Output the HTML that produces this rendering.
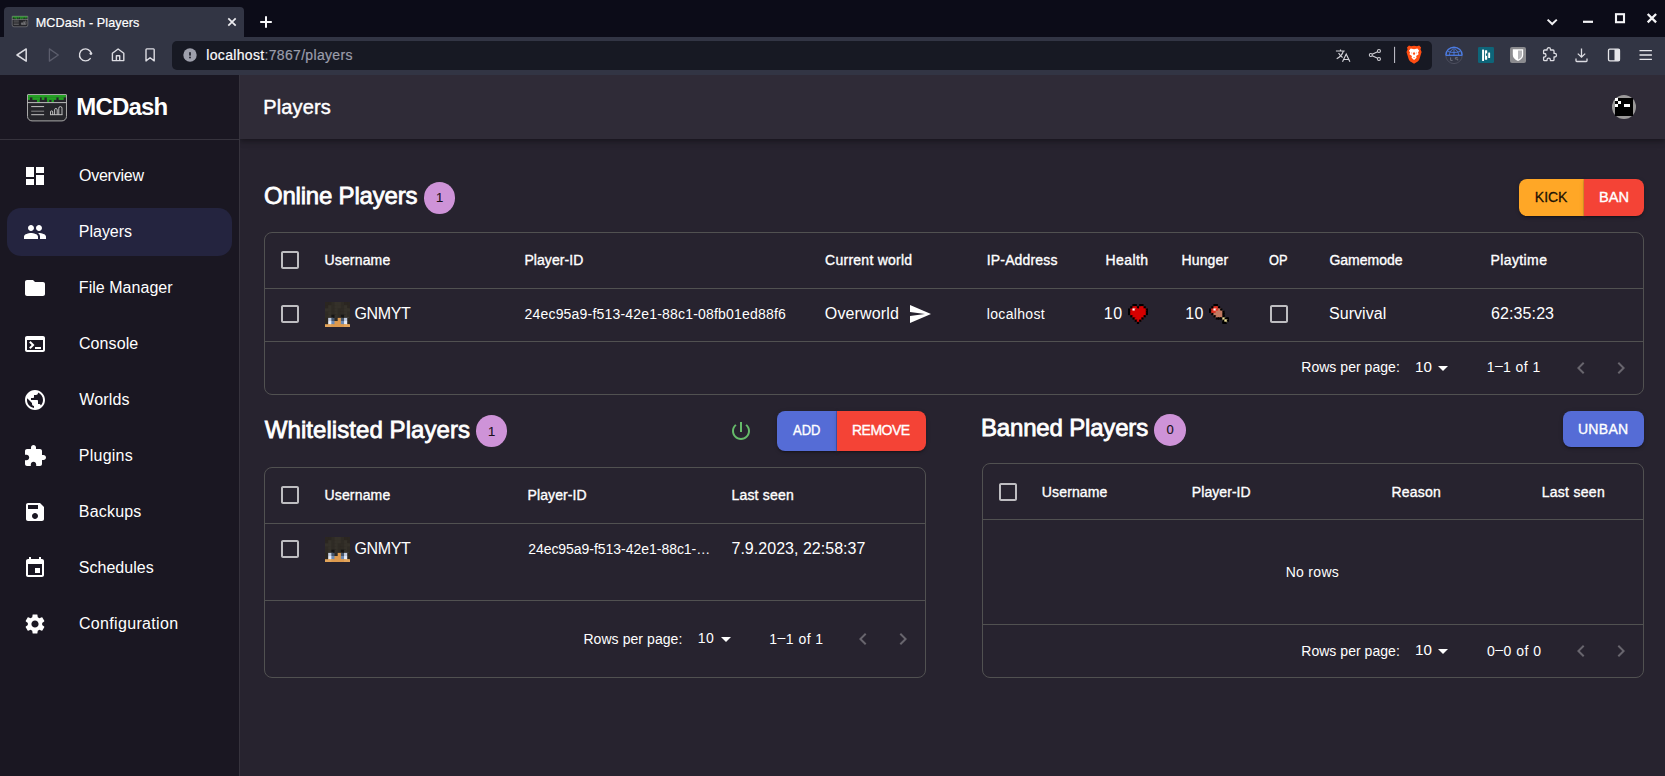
<!DOCTYPE html>
<html lang="en">
<head>
<meta charset="utf-8">
<title>MCDash - Players</title>
<style>
*{box-sizing:border-box;margin:0;padding:0}
html,body{width:1665px;height:776px;overflow:hidden;background:#27232f}
body{position:relative;font-family:"Liberation Sans",Arial,sans-serif;color:#fff;-webkit-font-smoothing:antialiased}
.abs,.t,.ic{position:absolute}
.t{white-space:nowrap;line-height:0;display:block;font-weight:400}
.t.m{-webkit-text-stroke:.35px currentColor}
h5.t.m{-webkit-text-stroke:.8px currentColor}
h6.t.m{-webkit-text-stroke:.45px currentColor}
.t.b{font-weight:700}
.dash{position:relative;top:-1.6px}
.t.s{-webkit-text-stroke:.2px currentColor}
.ic{display:block}
h1,h2,h5,h6{font-weight:400}
/* browser chrome */
.tabstrip{left:0;top:0;width:1665px;height:37px;background:#0c0c18}
.tab{left:4px;top:7px;width:240px;height:30px;background:#323544;border-radius:4px 4px 0 0}
.toolbar{left:0;top:37px;width:1665px;height:38px;background:#323544}
.urlbar{left:172px;top:41px;width:1260px;height:28.5px;background:#171923;border-radius:5px}
/* app */
.sidebar{left:0;top:75px;width:240px;height:701px;background:#1a1722;border-right:1px solid #36333d}
.sidehead{left:0;top:75px;width:239px;height:65px;border-bottom:1px solid #36333d}
.sel{left:7.3px;top:208px;width:224.6px;height:48px;border-radius:14px;background:#24243f}
.appbar{left:240px;top:75px;width:1425px;height:64px;background:#2f2b37;box-shadow:0 2px 4px -1px rgba(0,0,0,.2),0 4px 5px 0 rgba(0,0,0,.14),0 1px 10px 0 rgba(0,0,0,.12);clip-path:inset(0 0 -20px 0)}
.grid{border:1px solid #515151;border-radius:8px}
.hl{height:1px;background:#515151}
.badge{width:31.5px;height:32px;border-radius:50%;background:#ce93d8}
.btn{height:36.5px;box-shadow:0 3px 1px -2px rgba(0,0,0,.2),0 2px 2px 0 rgba(0,0,0,.14),0 1px 5px 0 rgba(0,0,0,.12)}
</style>
</head>
<body>

<div class="abs tabstrip"></div>
<div class="abs tab"></div>
<svg class="ic" style="left:12px;top:16.2px;width:16px;height:11px;overflow:visible" viewBox="0 0 40 27.4"><path d="M1 .5H39a.5 .5 0 0 1 .5 .5V22.400a4.500 4.500 0 0 1-4.500 4.500H5A4.500 4.500 0 0 1 .5 22.400V1A.5 .5 0 0 1 1 .5z" fill="#25252a"/><rect x="0.6" y="0.6" width="38.8" height="2.8" fill="#24a024"/><rect x="0.6" y="3.2" width="2.3" height="2.700" fill="#24a024"/><rect x="5.4" y="3.2" width="7.6" height="2.700" fill="#24a024"/><rect x="14.7" y="3.2" width="2.7" height="2.700" fill="#24a024"/><rect x="19.8" y="3.2" width="9.6" height="2.700" fill="#24a024"/><rect x="31.6" y="3.2" width="5.1" height="2.700" fill="#24a024"/><rect x="10.0" y="5.8" width="2.7" height="2.300" fill="#24a024"/><rect x="20.1" y="5.8" width="2.2" height="2.300" fill="#24a024"/><rect x="24.5" y="5.8" width="2.4" height="2.300" fill="#24a024"/><path d="M1 .5H39a.5 .5 0 0 1 .5 .5V22.400a4.500 4.500 0 0 1-4.500 4.500H5A4.500 4.500 0 0 1 .5 22.400V1A.5 .5 0 0 1 1 .5z" fill="none" stroke="#aaaaaa" stroke-width="1.1"/><path d="M.5 8.600H39.500" stroke="#bdbdbd" stroke-width="1.1" fill="none"/><path d="M4.200 12.600H17.100M4.200 20.700H17.100" stroke="#c4c4c4" stroke-width="1" fill="none"/><path d="M4.200 17.200H17.100" stroke="#8a8a8a" stroke-width="1" fill="none"/><path d="M23 20.700H35.500M23.500 20.700V18a1.100 1.100 0 0 1 2.200 0V20.700M27.600 20.700V15.800a1.300 1.300 0 0 1 2.600 0V20.700M31.800 20.700V14.200a1.600 1.600 0 0 1 3.200 0V20.700" stroke="#cfcfcf" stroke-width=".9" fill="none"/></svg>
<span class="t s" style="left:35.68px;top:23.00px;font-size:12.6px;letter-spacing:0.105px;color:#fff;">MCDash - Players</span>
<svg class="ic" style="left:226px;top:16px;width:12px;height:12px" viewBox="0 0 12 12"><path d="M2.300 2.300l7.400 7.400M9.700 2.300l-7.400 7.400" stroke="#ececf0" stroke-width="1.700" fill="none"/></svg>
<svg class="ic" style="left:259px;top:15px;width:14px;height:14px" viewBox="0 0 14 14"><path d="M7 1.200v11.600M1.200 7h11.600" stroke="#f8f8fa" stroke-width="2" fill="none"/></svg>
<svg class="ic" style="left:1540px;top:8px;width:125px;height:24px" viewBox="0 0 125 24"><path d="M7.600 11.600l4.600 4.400 4.600-4.400" stroke="#f0f0f2" stroke-width="2" fill="none"/><path d="M43 13.800h10" stroke="#f4f4f6" stroke-width="2.200" fill="none"/><rect x="76" y="6.200" width="8" height="8" stroke="#f4f4f6" stroke-width="2.100" fill="none"/><path d="M107.700 6l8.400 8.400M116.100 6l-8.400 8.400" stroke="#f4f4f6" stroke-width="2.300" fill="none"/></svg>
<div class="abs toolbar"></div>
<div class="abs urlbar"></div>
<svg class="ic" style="left:8px;top:43px;width:160px;height:24px" viewBox="0 0 160 24" fill="none" stroke-linejoin="round" stroke-linecap="round"><path d="M18.200 5.900L9 12l9.200 6.100z" stroke="#dcdce2" stroke-width="1.500"/><path d="M41.400 5.900L50.300 12l-8.900 6.100z" stroke="#5b5d6c" stroke-width="1.300"/><path d="M83.370 10.650A6 6 0 1 0 82.230 15.600" stroke="#dcdce2" stroke-width="1.400"/><circle cx="82.900" cy="10.600" r="1.400" fill="#dcdce2"/><path d="M104.400 17.600V10.300l5.700-4.300 5.700 4.300v7.300zM108.400 17.600v-4.800h3.300v4.800" stroke="#dcdce2" stroke-width="1.400"/><path d="M138 6.700a.8.800 0 0 1 .8-.8h6.600a.8.800 0 0 1 .8.800v11.200l-4.100-3.100-4.100 3.100z" stroke="#dcdce2" stroke-width="1.400"/></svg>
<svg class="ic" style="left:183px;top:47.600px;width:14px;height:14px" viewBox="0 0 14 14"><circle cx="7" cy="7" r="6.700" fill="#9ea0ac"/><rect x="6.200" y="4.200" width="1.600" height="3.400" fill="#171923"/><rect x="6.200" y="8.700" width="1.600" height="1.600" fill="#171923"/></svg>
<div class="t s" style="left:206.29px;top:55.00px;font-size:14px;letter-spacing:0.326px"><span style="color:#fbfbfd">localhost</span><span style="color:#9b9dab">:7867/players</span></div>
<svg class="ic" style="left:1330px;top:43px;width:335px;height:24px" viewBox="0 0 335 24"><g stroke="#d2d2d8" stroke-width="1.150" fill="none"><path d="M5.900 8h8.800M10.500 6.500V8M13.400 8c-1 3.400-3.400 6-6.700 7.800M8.600 10.100c.9 1.800 2.300 3.300 4 4.400"/><path d="M12.500 18.800l3.700-7.800 3.700 7.800M13.900 16.500h4.600"/></g><g stroke="#d2d2d8" stroke-width="1.050" fill="none"><circle cx="48.950" cy="8.050" r="1.500"/><circle cx="48.950" cy="16" r="1.500"/><circle cx="40.800" cy="12" r="1.500"/><path d="M42.200 11.300l5.400-2.600M42.200 12.700l5.400 2.600"/></g><path d="M64.600 3.800v16.200" stroke="#c9c9d2" stroke-width="1"/><g transform="translate(84.050 11.650) scale(1.240 1.150) translate(-84 -12.350)"><path d="M84 4.600l2.400.4 1.700-.6 1.600 1.800-.5 1.500.9 2.400-1.800 6.300c-.300 1-1 1.800-2 2.400L84 20.300l-2.300-1.500c-1-.600-1.700-1.400-2-2.400l-1.800-6.300.9-2.400-.500-1.500 1.600-1.800 1.700.6z" fill="#ff4d12"/><path d="M84 7.600l2.700-.5 1.400 1.900-.9 1.500.5 1.400-2 1.700.3 1.400L84 16.900l-2-1.900.3-1.400-2-1.700.5-1.400-.9-1.500 1.400-1.900z" fill="#fff"/><path d="M84 9.800l1 1.700-1 1.400-1-1.400zM81.600 10.400l1.100.5-.7.500zM86.400 10.400l-1.100.5.700.5zM83.300 14.400h1.400l-.7.900z" fill="#ff4d12"/></g><g fill="none"><path d="M115.800 12.400a8.200 8.200 0 0 0 16.400 0" stroke="#4b4d5d" stroke-width="1"/><path d="M115.800 12.400a8.200 8.200 0 0 1 16.400 0" stroke="#4c7ce2" stroke-width="1.400"/><path d="M116 12.300h16" stroke="#4c7ce2" stroke-width="1.300"/><path d="M124 4.300v8M119.300 12.300c.2-2.700 1.500-4.900 3.600-6.400M128.700 12.300c-.2-2.700-1.500-4.900-3.600-6.400M118 8.500c3.900 1.300 8.100 1.300 12 0" stroke="#4c7ce2" stroke-width=".9"/><path d="M120.600 14.400v3h2M127.700 14.600h-2.300v1.500h2.300v1.400" stroke="#6d6f7d" stroke-width="1"/></g><rect x="148" y="4" width="16" height="16" rx="1.200" fill="#0e6579"/><rect x="152.100" y="6.400" width="1.900" height="11.600" rx=".5" fill="#fff"/><rect x="154.900" y="7.200" width="2.300" height="9.600" rx=".5" fill="#fff"/><rect x="155.900" y="10.400" width="1.300" height="2.400" fill="#0e6579"/><rect x="158.200" y="9.600" width="1.900" height="5.300" rx=".5" fill="#fff"/><rect x="180" y="4" width="16" height="16" rx="2" fill="#8b8b8f"/><path d="M182.800 6.300h10.400v5.600c0 2.800-2.300 4.700-5.200 6.100-2.900-1.400-5.200-3.300-5.200-6.100z" fill="#fff"/><path d="M188 7.400h4v4.500c0 2.100-1.700 3.500-4 4.700z" fill="#8b8b8f" opacity=".62"/><g transform="translate(-1.700 0)"><path d="M216.200 7h2.600v-.6a1.700 1.700 0 0 1 3.400 0V7h2.600c.500 0 .900.400.900.900v2.500h.7a1.800 1.800 0 0 1 0 3.600h-.7v2.700c0 .500-.400.900-.900.900h-2.700v-.7a1.700 1.700 0 0 0-3.400 0v.7h-2.500a.9.900 0 0 1-.9-.9v-2.600h.6a1.800 1.800 0 0 0 0-3.600h-.6V7.900c0-.500.400-.900.900-.900z" stroke="#dcdce2" stroke-width="1.300" fill="none" stroke-linejoin="round"/></g><path d="M251.500 5.500v8.500M247.800 10.600l3.700 3.600 3.700-3.600M246 15.500v2.200c0 .5.400.8.800.8h9.400c.4 0 .800-.3.800-.8v-2.200" stroke="#dcdce2" stroke-width="1.300" fill="none"/><rect x="278.500" y="6.200" width="11" height="11.600" rx="1.300" stroke="#e6e6ea" stroke-width="1.300" fill="none"/><rect x="284.500" y="6.200" width="5.200" height="11.600" fill="#e6e6ea"/><path d="M309.500 7.600h12.400M309.500 12h12.400M309.500 16.400h12.400" stroke="#e6e6ea" stroke-width="1.400"/></svg>
<nav>
<div class="abs sidebar"></div><div class="abs sidehead"></div>
<svg class="ic" style="left:26.9px;top:93.9px;width:40px;height:27.4px;overflow:visible" viewBox="0 0 40 27.4"><path d="M1 .5H39a.5 .5 0 0 1 .5 .5V22.400a4.500 4.500 0 0 1-4.500 4.500H5A4.500 4.500 0 0 1 .5 22.400V1A.5 .5 0 0 1 1 .5z" fill="#25252a"/><rect x="0.6" y="0.6" width="38.8" height="2.8" fill="#24a024"/><rect x="0.6" y="3.2" width="2.3" height="2.700" fill="#24a024"/><rect x="5.4" y="3.2" width="7.6" height="2.700" fill="#24a024"/><rect x="14.7" y="3.2" width="2.7" height="2.700" fill="#24a024"/><rect x="19.8" y="3.2" width="9.6" height="2.700" fill="#24a024"/><rect x="31.6" y="3.2" width="5.1" height="2.700" fill="#24a024"/><rect x="10.0" y="5.8" width="2.7" height="2.300" fill="#24a024"/><rect x="20.1" y="5.8" width="2.2" height="2.300" fill="#24a024"/><rect x="24.5" y="5.8" width="2.4" height="2.300" fill="#24a024"/><path d="M1 .5H39a.5 .5 0 0 1 .5 .5V22.400a4.500 4.500 0 0 1-4.500 4.500H5A4.500 4.500 0 0 1 .5 22.400V1A.5 .5 0 0 1 1 .5z" fill="none" stroke="#aaaaaa" stroke-width="1.0"/><path d="M.5 8.600H39.500" stroke="#bdbdbd" stroke-width="1.0" fill="none"/><path d="M4.200 12.600H17.100M4.200 20.700H17.100" stroke="#c4c4c4" stroke-width="1" fill="none"/><path d="M4.200 17.200H17.100" stroke="#8a8a8a" stroke-width="1" fill="none"/><path d="M23 20.700H35.500M23.500 20.700V18a1.100 1.100 0 0 1 2.200 0V20.700M27.600 20.700V15.800a1.300 1.300 0 0 1 2.600 0V20.700M31.800 20.700V14.200a1.600 1.600 0 0 1 3.200 0V20.700" stroke="#cfcfcf" stroke-width=".9" fill="none"/></svg>
<h1 class="t b" style="left:76.23px;top:106.50px;font-size:24px;letter-spacing:-0.814px;">MCDash</h1>
<div class="abs sel"></div>
<svg class="ic" style="left:23px;top:164px;width:24px;height:24px;fill:#fff;" viewBox="0 0 24 24"><path d="M3 13h8V3H3v10zm0 8h8v-6H3v6zm10 0h8V11h-8v10zm0-18v6h8V3h-8z"/></svg>
<span class="t" style="left:78.91px;top:175.50px;font-size:16px;letter-spacing:-0.225px;">Overview</span>
<svg class="ic" style="left:23px;top:220px;width:24px;height:24px;fill:#fff;" viewBox="0 0 24 24"><path d="M16 11c1.660 0 2.990-1.340 2.990-3S17.660 5 16 5c-1.660 0-3 1.340-3 3s1.340 3 3 3zm-8 0c1.660 0 2.990-1.340 2.990-3S9.660 5 8 5C6.340 5 5 6.340 5 8s1.340 3 3 3zm0 2c-2.330 0-7 1.170-7 3.500V19h14v-2.500c0-2.330-4.670-3.500-7-3.500zm8 0c-.290 0-.620.020-.970.050 1.160.840 1.970 1.970 1.970 3.450V19h6v-2.500c0-2.330-4.670-3.500-7-3.500z"/></svg>
<span class="t" style="left:78.85px;top:231.50px;font-size:16px;letter-spacing:-0.029px;">Players</span>
<svg class="ic" style="left:23px;top:276px;width:24px;height:24px;fill:#fff;" viewBox="0 0 24 24"><path d="M10 4H4c-1.100 0-1.990.900-1.990 2L2 18c0 1.100.900 2 2 2h16c1.100 0 2-.900 2-2V8c0-1.100-.900-2-2-2h-8l-2-2z"/></svg>
<span class="t" style="left:78.86px;top:287.50px;font-size:16px;letter-spacing:0.030px;">File Manager</span>
<svg class="ic" style="left:23px;top:332px;width:24px;height:24px;fill:#fff;" viewBox="0 0 24 24"><path d="M20 4H4c-1.110 0-2 .900-2 2v12c0 1.100.890 2 2 2h16c1.100 0 2-.900 2-2V6c0-1.100-.890-2-2-2zm0 14H4V8h16v10zm-2-1h-6v-2h6v2zM7.500 17l-1.410-1.410L8.670 13l-2.590-2.590L7.500 9l4 4-4 4z"/></svg>
<span class="t" style="left:78.88px;top:343.50px;font-size:16px;letter-spacing:0.106px;">Console</span>
<svg class="ic" style="left:23px;top:388px;width:24px;height:24px;fill:#fff;" viewBox="0 0 24 24"><path d="M12 2C6.480 2 2 6.480 2 12s4.480 10 10 10 10-4.480 10-10S17.520 2 12 2zm-1 17.930c-3.950-.490-7-3.850-7-7.930 0-.620.080-1.210.210-1.790L9 15v1c0 1.100.900 2 2 2v1.930zm6.900-2.540c-.260-.810-1-1.390-1.900-1.390h-1v-3c0-.550-.450-1-1-1H8v-2h2c.550 0 1-.450 1-1V7h2c1.100 0 2-.900 2-2v-.410c2.930 1.190 5 4.060 5 7.410 0 2.080-.800 3.970-2.100 5.390z"/></svg>
<span class="t" style="left:79.32px;top:399.50px;font-size:16px;letter-spacing:0.134px;">Worlds</span>
<svg class="ic" style="left:23px;top:444px;width:24px;height:24px;fill:#fff;" viewBox="0 0 24 24"><path d="M20.500 11H19V7c0-1.100-.900-2-2-2h-4V3.500C13 2.120 11.880 1 10.500 1S8 2.120 8 3.500V5H4c-1.100 0-1.990.900-1.990 2v3.800H3.500c1.490 0 2.700 1.210 2.700 2.700s-1.210 2.700-2.700 2.700H2V20c0 1.100.900 2 2 2h3.800v-1.500c0-1.490 1.210-2.700 2.700-2.700 1.490 0 2.700 1.210 2.700 2.700V22H17c1.100 0 2-.900 2-2v-4h1.500c1.380 0 2.500-1.120 2.500-2.500S21.880 11 20.500 11z"/></svg>
<span class="t" style="left:78.86px;top:455.50px;font-size:16px;letter-spacing:0.234px;">Plugins</span>
<svg class="ic" style="left:23px;top:500px;width:24px;height:24px;fill:#fff;" viewBox="0 0 24 24"><path d="M17 3H5c-1.110 0-2 .900-2 2v14c0 1.100.890 2 2 2h14c1.100 0 2-.900 2-2V7l-4-4zm-5 16c-1.660 0-3-1.340-3-3s1.340-3 3-3 3 1.340 3 3-1.340 3-3 3zm3-10H5V5h10v4z"/></svg>
<span class="t" style="left:78.86px;top:511.50px;font-size:16px;letter-spacing:0.179px;">Backups</span>
<svg class="ic" style="left:23px;top:556px;width:24px;height:24px;fill:#fff;" viewBox="0 0 24 24"><path d="M17 12h-5v5h5v-5zM16 1v2H8V1H6v2H5c-1.110 0-1.990.900-1.990 2L3 19c0 1.100.890 2 2 2h14c1.100 0 2-.900 2-2V5c0-1.100-.900-2-2-2h-1V1h-2zm3 18H5V8h14v11z"/></svg>
<span class="t" style="left:78.79px;top:567.50px;font-size:16px;letter-spacing:0.029px;">Schedules</span>
<svg class="ic" style="left:23px;top:612px;width:24px;height:24px;fill:#fff;" viewBox="0 0 24 24"><path d="M19.140 12.940c.040-.300.060-.610.060-.940 0-.320-.020-.640-.070-.940l2.030-1.580c.180-.140.230-.410.120-.610l-1.920-3.320c-.120-.220-.370-.290-.590-.220l-2.390.960c-.500-.380-1.030-.700-1.620-.940l-.360-2.540c-.040-.240-.240-.410-.480-.410h-3.840c-.240 0-.430.170-.470.410l-.360 2.540c-.590.240-1.130.570-1.620.940l-2.390-.960c-.220-.080-.470 0-.590.220L2.740 8.870c-.120.210-.080.470.120.610l2.030 1.580c-.050.300-.090.630-.090.940s.020.640.070.940l-2.030 1.580c-.180.140-.230.410-.120.610l1.920 3.320c.120.220.370.290.590.220l2.390-.960c.500.380 1.030.700 1.620.940l.360 2.540c.050.240.240.410.480.410h3.840c.240 0 .440-.170.470-.410l.360-2.540c.590-.240 1.130-.560 1.620-.940l2.390.960c.220.080.470 0 .590-.220l1.920-3.320c.120-.220.070-.470-.120-.610l-2.010-1.580zM12 15.600c-1.980 0-3.600-1.620-3.600-3.600s1.620-3.600 3.600-3.600 3.600 1.620 3.600 3.600-1.620 3.600-3.600 3.600z"/></svg>
<span class="t" style="left:78.88px;top:623.50px;font-size:16px;letter-spacing:0.337px;">Configuration</span>
</nav>
<header>
<div class="abs appbar"></div>
<h6 class="t m" style="left:263.18px;top:107.00px;font-size:20px;letter-spacing:0.166px;">Players</h6>
<div class="abs" style="left:1612px;top:95px;width:24px;height:24px;border-radius:50%;background:#9b9999"></div>
<svg class="ic" style="left:1615px;top:98px;width:18px;height:18px" viewBox="0 0 6 6"><rect width="6" height="6" fill="#000"/><rect x="0" y="0" width="1" height="1" fill="#fff"/><rect x="1" y="1" width="1" height="1" fill="#fff"/><rect x="0" y="2" width="1" height="1" fill="#fff"/><rect x="3" y="2" width="2" height="1" fill="#fff"/></svg>
</header>
<main>
<section>
<h5 class="t m" style="left:263.92px;top:195.50px;font-size:24px;letter-spacing:-0.193px;">Online Players</h5>
<div class="abs badge" style="left:423.800px;top:181.800px"></div>
<span class="t s" style="left:436.08px;top:197.50px;font-size:13px;color:rgba(0,0,0,.87);">1</span>
<div class="abs btn" style="left:1519px;top:179px;width:64.500px;background:#ffa726;border-radius:8px 0 0 8px;border-right:1px solid #e39a2b"></div>
<div class="abs btn" style="left:1583.500px;top:179px;width:60.500px;background:#f44336;border-radius:0 8px 8px 0"></div>
<span class="t m" style="left:1534.87px;top:197.00px;font-size:14px;letter-spacing:-0.027px;color:rgba(0,0,0,.87);">KICK</span>
<span class="t m" style="left:1598.78px;top:197.00px;font-size:14px;transform:scaleX(1.0431);transform-origin:0 0;">BAN</span>
<div class="abs grid" style="left:264px;top:232px;width:1380px;height:163px"></div>
<div class="abs hl" style="left:265px;top:288px;width:1378px"></div>
<div class="abs hl" style="left:265px;top:341px;width:1378px"></div>
<svg class="ic" style="left:278px;top:248px;width:24px;height:24px;fill:rgba(255,255,255,0.7);" viewBox="0 0 24 24"><path d="M19 5v14H5V5h14m0-2H5c-1.100 0-2 .900-2 2v14c0 1.100.900 2 2 2h14c1.100 0 2-.900 2-2V5c0-1.100-.900-2-2-2z"/></svg>
<span class="t m" style="left:324.50px;top:260.00px;font-size:14px;letter-spacing:0.157px;">Username</span>
<span class="t m" style="left:524.42px;top:260.00px;font-size:14px;letter-spacing:0.070px;">Player-ID</span>
<span class="t m" style="left:825.12px;top:260.00px;font-size:14px;letter-spacing:0.250px;">Current world</span>
<span class="t m" style="left:986.80px;top:260.00px;font-size:14px;letter-spacing:0.149px;">IP-Address</span>
<span class="t m" style="left:1105.42px;top:260.00px;font-size:14px;letter-spacing:0.442px;">Health</span>
<span class="t m" style="left:1181.42px;top:260.00px;font-size:14px;letter-spacing:0.164px;">Hunger</span>
<span class="t m" style="left:1269.33px;top:260.00px;font-size:14px;transform:scaleX(0.9178);transform-origin:0 0;">OP</span>
<span class="t m" style="left:1329.41px;top:260.00px;font-size:14px;letter-spacing:0.010px;">Gamemode</span>
<span class="t m" style="left:1490.54px;top:260.00px;font-size:14px;letter-spacing:0.392px;">Playtime</span>
<svg class="ic" style="left:278px;top:302px;width:24px;height:24px;fill:rgba(255,255,255,0.7);" viewBox="0 0 24 24"><path d="M19 5v14H5V5h14m0-2H5c-1.100 0-2 .900-2 2v14c0 1.100.900 2 2 2h14c1.100 0 2-.900 2-2V5c0-1.100-.900-2-2-2z"/></svg>
<svg class="ic" style="left:324.9px;top:302px;width:25.4px;height:25.4px" viewBox="0 0 8 8"><rect x="0" y="0" width="1.5" height="1.5" fill="#2b2621"/><rect x="1" y="0" width="1.5" height="1.5" fill="#2b2621"/><rect x="2" y="0" width="1.5" height="1.5" fill="#2f2b25"/><rect x="3" y="0" width="1.5" height="1.5" fill="#35312a"/><rect x="4" y="0" width="1.5" height="1.5" fill="#35312a"/><rect x="5" y="0" width="1.5" height="1.5" fill="#2f2b25"/><rect x="6" y="0" width="1.5" height="1.5" fill="#2b2621"/><rect x="7" y="0" width="1" height="1.5" fill="#2b2621"/><rect x="0" y="1" width="1.5" height="1.5" fill="#2b2621"/><rect x="1" y="1" width="1.5" height="1.5" fill="#35312a"/><rect x="2" y="1" width="1.5" height="1.5" fill="#2f2b25"/><rect x="3" y="1" width="1.5" height="1.5" fill="#35312a"/><rect x="4" y="1" width="1.5" height="1.5" fill="#35312a"/><rect x="5" y="1" width="1.5" height="1.5" fill="#2f2b25"/><rect x="6" y="1" width="1.5" height="1.5" fill="#35312a"/><rect x="7" y="1" width="1" height="1.5" fill="#2b2621"/><rect x="0" y="2" width="1.5" height="1.5" fill="#35312a"/><rect x="1" y="2" width="1.5" height="1.5" fill="#35312a"/><rect x="2" y="2" width="1.5" height="1.5" fill="#2f2b25"/><rect x="3" y="2" width="1.5" height="1.5" fill="#35312a"/><rect x="4" y="2" width="1.5" height="1.5" fill="#2f2b25"/><rect x="5" y="2" width="1.5" height="1.5" fill="#2f2b25"/><rect x="6" y="2" width="1.5" height="1.5" fill="#35312a"/><rect x="7" y="2" width="1" height="1.5" fill="#35312a"/><rect x="0" y="3" width="1.5" height="1.5" fill="#2f2b25"/><rect x="1" y="3" width="1.5" height="1.5" fill="#35312a"/><rect x="2" y="3" width="1.5" height="1.5" fill="#2f2b25"/><rect x="3" y="3" width="1.5" height="1.5" fill="#35312a"/><rect x="4" y="3" width="1.5" height="1.5" fill="#2f2b25"/><rect x="5" y="3" width="1.5" height="1.5" fill="#2f2b25"/><rect x="6" y="3" width="1.5" height="1.5" fill="#35312a"/><rect x="7" y="3" width="1" height="1.5" fill="#2f2b25"/><rect x="0" y="4" width="1.5" height="1.5" fill="#2f2b25"/><rect x="1" y="4" width="1.5" height="1.5" fill="#35312a"/><rect x="2" y="4" width="1.5" height="1.5" fill="#161514"/><rect x="3" y="4" width="1.5" height="1.5" fill="#35312a"/><rect x="4" y="4" width="1.5" height="1.5" fill="#2f2b25"/><rect x="5" y="4" width="1.5" height="1.5" fill="#161514"/><rect x="6" y="4" width="1.5" height="1.5" fill="#35312a"/><rect x="7" y="4" width="1" height="1.5" fill="#2f2b25"/><rect x="0" y="5" width="1.5" height="1.5" fill="#2b2621"/><rect x="1" y="5" width="1.5" height="1.5" fill="#c3cde0"/><rect x="2" y="5" width="1.5" height="1.5" fill="#45556b"/><rect x="3" y="5" width="1.5" height="1.5" fill="#2f2b25"/><rect x="4" y="5" width="1.5" height="1.5" fill="#dd9a4e"/><rect x="5" y="5" width="1.5" height="1.5" fill="#45556b"/><rect x="6" y="5" width="1.5" height="1.5" fill="#c3cde0"/><rect x="7" y="5" width="1" height="1.5" fill="#2b2621"/><rect x="0" y="6" width="1.5" height="1.5" fill="#2b2621"/><rect x="1" y="6" width="1.5" height="1.5" fill="#e6ecf7"/><rect x="2" y="6" width="1.5" height="1.5" fill="#6d8ab3"/><rect x="3" y="6" width="1.5" height="1.5" fill="#dd9a4e"/><rect x="4" y="6" width="1.5" height="1.5" fill="#dd9a4e"/><rect x="5" y="6" width="1.5" height="1.5" fill="#6d8ab3"/><rect x="6" y="6" width="1.5" height="1.5" fill="#e6ecf7"/><rect x="7" y="6" width="1" height="1.5" fill="#2b2621"/><rect x="0" y="7" width="1.5" height="1" fill="#e2a45a"/><rect x="1" y="7" width="1.5" height="1" fill="#e2a45a"/><rect x="2" y="7" width="1.5" height="1" fill="#dd9a4e"/><rect x="3" y="7" width="1.5" height="1" fill="#dd9a4e"/><rect x="4" y="7" width="1.5" height="1" fill="#dd9a4e"/><rect x="5" y="7" width="1.5" height="1" fill="#dd9a4e"/><rect x="6" y="7" width="1.5" height="1" fill="#e2a45a"/><rect x="7" y="7" width="1" height="1" fill="#e2a45a"/></svg>
<span class="t" style="left:354.48px;top:313.50px;font-size:16px;letter-spacing:-0.375px;">GNMYT</span>
<span class="t" style="left:524.51px;top:314.00px;font-size:14px;letter-spacing:0.193px;">24ec95a9-f513-42e1-88c1-08fb01ed88f6</span>
<span class="t" style="left:824.84px;top:313.50px;font-size:16px;letter-spacing:0.130px;">Overworld</span>
<svg class="ic" style="left:907.7px;top:302px;width:24px;height:24px;fill:#fff;" viewBox="0 0 24 24"><path d="M2.010 21L23 12 2.010 3 2 10l15 2-15 2z"/></svg>
<span class="t" style="left:986.73px;top:314.00px;font-size:14px;letter-spacing:0.342px;">localhost</span>
<span class="t" style="left:1103.70px;top:313.50px;font-size:16px;letter-spacing:0.717px;">10</span>
<svg class="ic" style="left:1128px;top:304px;width:20px;height:20px" viewBox="0 0 9 9"><rect x="2" y="0" width="1.5" height="1.5" fill="#000"/><rect x="3" y="0" width="1" height="1.5" fill="#000"/><rect x="5" y="0" width="1.5" height="1.5" fill="#000"/><rect x="6" y="0" width="1" height="1.5" fill="#000"/><rect x="1" y="1" width="1.5" height="1.5" fill="#000"/><rect x="2" y="1" width="1.5" height="1.5" fill="#d60000"/><rect x="3" y="1" width="1.5" height="1.5" fill="#d60000"/><rect x="4" y="1" width="1.5" height="1.5" fill="#000"/><rect x="5" y="1" width="1.5" height="1.5" fill="#d60000"/><rect x="6" y="1" width="1.5" height="1.5" fill="#d60000"/><rect x="7" y="1" width="1" height="1.5" fill="#000"/><rect x="0" y="2" width="1.5" height="1.5" fill="#000"/><rect x="1" y="2" width="1.5" height="1.5" fill="#d60000"/><rect x="2" y="2" width="1.5" height="1.5" fill="#fff"/><rect x="3" y="2" width="1.5" height="1.5" fill="#d60000"/><rect x="4" y="2" width="1.5" height="1.5" fill="#d60000"/><rect x="5" y="2" width="1.5" height="1.5" fill="#d60000"/><rect x="6" y="2" width="1.5" height="1.5" fill="#d60000"/><rect x="7" y="2" width="1.5" height="1.5" fill="#d60000"/><rect x="8" y="2" width="1" height="1.5" fill="#000"/><rect x="0" y="3" width="1.5" height="1.5" fill="#000"/><rect x="1" y="3" width="1.5" height="1.5" fill="#d60000"/><rect x="2" y="3" width="1.5" height="1.5" fill="#d60000"/><rect x="3" y="3" width="1.5" height="1.5" fill="#d60000"/><rect x="4" y="3" width="1.5" height="1.5" fill="#d60000"/><rect x="5" y="3" width="1.5" height="1.5" fill="#d60000"/><rect x="6" y="3" width="1.5" height="1.5" fill="#d60000"/><rect x="7" y="3" width="1.5" height="1.5" fill="#d60000"/><rect x="8" y="3" width="1" height="1.5" fill="#000"/><rect x="0" y="4" width="1.5" height="1" fill="#000"/><rect x="1" y="4" width="1.5" height="1.5" fill="#d60000"/><rect x="2" y="4" width="1.5" height="1.5" fill="#d60000"/><rect x="3" y="4" width="1.5" height="1.5" fill="#d60000"/><rect x="4" y="4" width="1.5" height="1.5" fill="#d60000"/><rect x="5" y="4" width="1.5" height="1.5" fill="#d60000"/><rect x="6" y="4" width="1.5" height="1.5" fill="#d60000"/><rect x="7" y="4" width="1.500" height="1" fill="#d60000"/><rect x="7" y="4" width="1" height="1.500" fill="#d60000"/><rect x="8" y="4" width="1" height="1" fill="#000"/><rect x="1" y="5" width="1.5" height="1" fill="#000"/><rect x="2" y="5" width="1.5" height="1.5" fill="#d60000"/><rect x="3" y="5" width="1.5" height="1.5" fill="#d60000"/><rect x="4" y="5" width="1.5" height="1.5" fill="#d60000"/><rect x="5" y="5" width="1.5" height="1.5" fill="#d60000"/><rect x="6" y="5" width="1.500" height="1" fill="#d60000"/><rect x="6" y="5" width="1" height="1.500" fill="#d60000"/><rect x="7" y="5" width="1" height="1" fill="#000"/><rect x="2" y="6" width="1.5" height="1" fill="#000"/><rect x="3" y="6" width="1.5" height="1.5" fill="#d60000"/><rect x="4" y="6" width="1.5" height="1.5" fill="#d60000"/><rect x="5" y="6" width="1.500" height="1" fill="#d60000"/><rect x="5" y="6" width="1" height="1.500" fill="#d60000"/><rect x="6" y="6" width="1" height="1" fill="#000"/><rect x="3" y="7" width="1.5" height="1" fill="#000"/><rect x="4" y="7" width="1.500" height="1" fill="#d60000"/><rect x="4" y="7" width="1" height="1.500" fill="#d60000"/><rect x="5" y="7" width="1" height="1" fill="#000"/><rect x="4" y="8" width="1" height="1" fill="#000"/></svg>
<span class="t" style="left:1185.18px;top:313.50px;font-size:16px;letter-spacing:0.442px;">10</span>
<svg class="ic" style="left:1209.2px;top:304px;width:20px;height:20px" viewBox="0 0 9 9"><rect x="2" y="0" width="1.5" height="1.5" fill="#000"/><rect x="3" y="0" width="1" height="1.5" fill="#000"/><rect x="1" y="1" width="1.5" height="1.5" fill="#000"/><rect x="2" y="1" width="1.5" height="1.5" fill="#e23222"/><rect x="3" y="1" width="1.5" height="1.5" fill="#e23222"/><rect x="4" y="1" width="1" height="1.5" fill="#000"/><rect x="0" y="2" width="1.5" height="1.5" fill="#000"/><rect x="1" y="2" width="1.5" height="1.5" fill="#e23222"/><rect x="2" y="2" width="1.5" height="1.5" fill="#fff"/><rect x="3" y="2" width="1.5" height="1.5" fill="#e23222"/><rect x="4" y="2" width="1.5" height="1.5" fill="#c27a62"/><rect x="5" y="2" width="1" height="1.5" fill="#000"/><rect x="0" y="3" width="1.5" height="1" fill="#000"/><rect x="1" y="3" width="1.5" height="1.5" fill="#e23222"/><rect x="2" y="3" width="1.5" height="1.5" fill="#e23222"/><rect x="3" y="3" width="1.5" height="1.5" fill="#c27a62"/><rect x="4" y="3" width="1.5" height="1.5" fill="#c27a62"/><rect x="5" y="3" width="1.5" height="1.5" fill="#c27a62"/><rect x="6" y="3" width="1" height="1.5" fill="#000"/><rect x="1" y="4" width="1.5" height="1" fill="#000"/><rect x="2" y="4" width="1.5" height="1.5" fill="#c27a62"/><rect x="3" y="4" width="1.5" height="1.5" fill="#c27a62"/><rect x="4" y="4" width="1.5" height="1.5" fill="#c27a62"/><rect x="5" y="4" width="1.5" height="1.5" fill="#c27a62"/><rect x="6" y="4" width="1" height="1.5" fill="#000"/><rect x="2" y="5" width="1.5" height="1" fill="#000"/><rect x="3" y="5" width="1.5" height="1.5" fill="#c27a62"/><rect x="4" y="5" width="1.5" height="1.5" fill="#c27a62"/><rect x="5" y="5" width="1.5" height="1.5" fill="#c27a62"/><rect x="6" y="5" width="1" height="1.5" fill="#000"/><rect x="3" y="6" width="1.5" height="1" fill="#000"/><rect x="4" y="6" width="1.5" height="1" fill="#000"/><rect x="5" y="6" width="1.5" height="1" fill="#000"/><rect x="6" y="6" width="1.5" height="1.5" fill="#efe09a"/><rect x="7" y="6" width="1.5" height="1.5" fill="#000"/><rect x="8" y="6" width="1" height="1.5" fill="#000"/><rect x="6" y="7" width="1.5" height="1.5" fill="#000"/><rect x="7" y="7" width="1.500" height="1" fill="#efe09a"/><rect x="7" y="7" width="1" height="1.500" fill="#efe09a"/><rect x="8" y="7" width="1" height="1" fill="#000"/><rect x="6" y="8" width="1.5" height="1" fill="#000"/><rect x="7" y="8" width="1" height="1" fill="#000"/></svg>
<svg class="ic" style="left:1267px;top:302px;width:24px;height:24px;fill:rgba(255,255,255,0.7);" viewBox="0 0 24 24"><path d="M19 5v14H5V5h14m0-2H5c-1.100 0-2 .900-2 2v14c0 1.100.900 2 2 2h14c1.100 0 2-.900 2-2V5c0-1.100-.900-2-2-2z"/></svg>
<span class="t" style="left:1328.94px;top:313.50px;font-size:16px;letter-spacing:0.060px;">Survival</span>
<span class="t" style="left:1491.08px;top:313.50px;font-size:16px;letter-spacing:0.094px;">62:35:23</span>
<span class="t" style="left:1301.24px;top:367.00px;font-size:14px;letter-spacing:0.038px;">Rows per page:</span><span class="t" style="left:1414.71px;top:367.00px;font-size:14px;transform:scaleX(1.0798);transform-origin:0 0;">10</span><svg class="ic" style="left:1431px;top:355.8px;width:24px;height:24px;fill:#fff;" viewBox="0 0 24 24"><path d="M7 10l5 5 5-5z"/></svg><span class="t" style="left:1486.69px;top:367.00px;font-size:14px;letter-spacing:0.411px;">1<span class="dash">–</span>1 of 1</span><svg class="ic" style="left:1569px;top:355.5px;width:24px;height:24px;fill:rgba(255,255,255,0.3);" viewBox="0 0 24 24"><path d="M15.410 16.590L10.830 12l4.580-4.590L14 6l-6 6 6 6 1.410-1.410z"/></svg><svg class="ic" style="left:1609px;top:355.5px;width:24px;height:24px;fill:rgba(255,255,255,0.3);" viewBox="0 0 24 24"><path d="M8.590 16.590L13.170 12 8.590 7.410 10 6l6 6-6 6-1.410-1.410z"/></svg>
</section>
<section>
<h5 class="t m" style="left:264.84px;top:429.50px;font-size:24px;letter-spacing:0.059px;">Whitelisted Players</h5>
<div class="abs badge" style="left:475.750px;top:414.800px"></div>
<span class="t s" style="left:487.98px;top:431.50px;font-size:13px;color:rgba(0,0,0,.87);">1</span>
<svg class="ic" style="left:728.9px;top:418.9px;width:24px;height:24px;fill:#66bb6a;" viewBox="0 0 24 24"><path d="M13 3h-2v10h2V3zm4.830 2.170l-1.420 1.420C17.990 7.860 19 9.810 19 12c0 3.870-3.130 7-7 7s-7-3.130-7-7c0-2.190 1.010-4.140 2.580-5.420L6.170 5.170C4.230 6.820 3 9.260 3 12c0 4.970 4.030 9 9 9s9-4.030 9-9c0-2.740-1.230-5.180-3.170-6.830z"/></svg>
<div class="abs btn" style="left:777px;top:411px;width:60px;height:40px;background:#556cd6;border-radius:8px 0 0 8px;border-right:1px solid #3f55b5"></div>
<div class="abs btn" style="left:837px;top:411px;width:89px;height:40px;background:#f44336;border-radius:0 8px 8px 0"></div>
<span class="t m" style="left:793.35px;top:430.00px;font-size:14px;transform:scaleX(0.9262);transform-origin:0 0;">ADD</span>
<span class="t m" style="left:852.02px;top:430.00px;font-size:14px;letter-spacing:-0.512px;">REMOVE</span>
<div class="abs grid" style="left:264px;top:467px;width:662px;height:211px"></div>
<div class="abs hl" style="left:265px;top:523px;width:660px"></div>
<div class="abs hl" style="left:265px;top:600px;width:660px"></div>
<svg class="ic" style="left:278px;top:483px;width:24px;height:24px;fill:rgba(255,255,255,0.7);" viewBox="0 0 24 24"><path d="M19 5v14H5V5h14m0-2H5c-1.100 0-2 .900-2 2v14c0 1.100.900 2 2 2h14c1.100 0 2-.900 2-2V5c0-1.100-.900-2-2-2z"/></svg>
<span class="t m" style="left:324.50px;top:495.00px;font-size:14px;letter-spacing:0.157px;">Username</span>
<span class="t m" style="left:527.54px;top:495.00px;font-size:14px;letter-spacing:0.095px;">Player-ID</span>
<span class="t m" style="left:731.42px;top:495.00px;font-size:14px;letter-spacing:0.203px;">Last seen</span>
<svg class="ic" style="left:278px;top:537px;width:24px;height:24px;fill:rgba(255,255,255,0.7);" viewBox="0 0 24 24"><path d="M19 5v14H5V5h14m0-2H5c-1.100 0-2 .900-2 2v14c0 1.100.900 2 2 2h14c1.100 0 2-.900 2-2V5c0-1.100-.900-2-2-2z"/></svg>
<svg class="ic" style="left:324.9px;top:537px;width:25.4px;height:25.4px" viewBox="0 0 8 8"><rect x="0" y="0" width="1.5" height="1.5" fill="#2b2621"/><rect x="1" y="0" width="1.5" height="1.5" fill="#2b2621"/><rect x="2" y="0" width="1.5" height="1.5" fill="#2f2b25"/><rect x="3" y="0" width="1.5" height="1.5" fill="#35312a"/><rect x="4" y="0" width="1.5" height="1.5" fill="#35312a"/><rect x="5" y="0" width="1.5" height="1.5" fill="#2f2b25"/><rect x="6" y="0" width="1.5" height="1.5" fill="#2b2621"/><rect x="7" y="0" width="1" height="1.5" fill="#2b2621"/><rect x="0" y="1" width="1.5" height="1.5" fill="#2b2621"/><rect x="1" y="1" width="1.5" height="1.5" fill="#35312a"/><rect x="2" y="1" width="1.5" height="1.5" fill="#2f2b25"/><rect x="3" y="1" width="1.5" height="1.5" fill="#35312a"/><rect x="4" y="1" width="1.5" height="1.5" fill="#35312a"/><rect x="5" y="1" width="1.5" height="1.5" fill="#2f2b25"/><rect x="6" y="1" width="1.5" height="1.5" fill="#35312a"/><rect x="7" y="1" width="1" height="1.5" fill="#2b2621"/><rect x="0" y="2" width="1.5" height="1.5" fill="#35312a"/><rect x="1" y="2" width="1.5" height="1.5" fill="#35312a"/><rect x="2" y="2" width="1.5" height="1.5" fill="#2f2b25"/><rect x="3" y="2" width="1.5" height="1.5" fill="#35312a"/><rect x="4" y="2" width="1.5" height="1.5" fill="#2f2b25"/><rect x="5" y="2" width="1.5" height="1.5" fill="#2f2b25"/><rect x="6" y="2" width="1.5" height="1.5" fill="#35312a"/><rect x="7" y="2" width="1" height="1.5" fill="#35312a"/><rect x="0" y="3" width="1.5" height="1.5" fill="#2f2b25"/><rect x="1" y="3" width="1.5" height="1.5" fill="#35312a"/><rect x="2" y="3" width="1.5" height="1.5" fill="#2f2b25"/><rect x="3" y="3" width="1.5" height="1.5" fill="#35312a"/><rect x="4" y="3" width="1.5" height="1.5" fill="#2f2b25"/><rect x="5" y="3" width="1.5" height="1.5" fill="#2f2b25"/><rect x="6" y="3" width="1.5" height="1.5" fill="#35312a"/><rect x="7" y="3" width="1" height="1.5" fill="#2f2b25"/><rect x="0" y="4" width="1.5" height="1.5" fill="#2f2b25"/><rect x="1" y="4" width="1.5" height="1.5" fill="#35312a"/><rect x="2" y="4" width="1.5" height="1.5" fill="#161514"/><rect x="3" y="4" width="1.5" height="1.5" fill="#35312a"/><rect x="4" y="4" width="1.5" height="1.5" fill="#2f2b25"/><rect x="5" y="4" width="1.5" height="1.5" fill="#161514"/><rect x="6" y="4" width="1.5" height="1.5" fill="#35312a"/><rect x="7" y="4" width="1" height="1.5" fill="#2f2b25"/><rect x="0" y="5" width="1.5" height="1.5" fill="#2b2621"/><rect x="1" y="5" width="1.5" height="1.5" fill="#c3cde0"/><rect x="2" y="5" width="1.5" height="1.5" fill="#45556b"/><rect x="3" y="5" width="1.5" height="1.5" fill="#2f2b25"/><rect x="4" y="5" width="1.5" height="1.5" fill="#dd9a4e"/><rect x="5" y="5" width="1.5" height="1.5" fill="#45556b"/><rect x="6" y="5" width="1.5" height="1.5" fill="#c3cde0"/><rect x="7" y="5" width="1" height="1.5" fill="#2b2621"/><rect x="0" y="6" width="1.5" height="1.5" fill="#2b2621"/><rect x="1" y="6" width="1.5" height="1.5" fill="#e6ecf7"/><rect x="2" y="6" width="1.5" height="1.5" fill="#6d8ab3"/><rect x="3" y="6" width="1.5" height="1.5" fill="#dd9a4e"/><rect x="4" y="6" width="1.5" height="1.5" fill="#dd9a4e"/><rect x="5" y="6" width="1.5" height="1.5" fill="#6d8ab3"/><rect x="6" y="6" width="1.5" height="1.5" fill="#e6ecf7"/><rect x="7" y="6" width="1" height="1.5" fill="#2b2621"/><rect x="0" y="7" width="1.5" height="1" fill="#e2a45a"/><rect x="1" y="7" width="1.5" height="1" fill="#e2a45a"/><rect x="2" y="7" width="1.5" height="1" fill="#dd9a4e"/><rect x="3" y="7" width="1.5" height="1" fill="#dd9a4e"/><rect x="4" y="7" width="1.5" height="1" fill="#dd9a4e"/><rect x="5" y="7" width="1.5" height="1" fill="#dd9a4e"/><rect x="6" y="7" width="1.5" height="1" fill="#e2a45a"/><rect x="7" y="7" width="1" height="1" fill="#e2a45a"/></svg>
<span class="t" style="left:354.48px;top:548.50px;font-size:16px;letter-spacing:-0.375px;">GNMYT</span>
<span class="t" style="left:528.15px;top:549.00px;font-size:14px;letter-spacing:-0.034px;">24ec95a9-f513-42e1-88c1-…</span>
<span class="t" style="left:731.48px;top:548.50px;font-size:16px;letter-spacing:0.029px;">7.9.2023, 22:58:37</span>
<span class="t" style="left:583.40px;top:639.00px;font-size:14px;letter-spacing:0.069px;">Rows per page:</span><span class="t" style="left:697.68px;top:638.00px;font-size:14px;letter-spacing:0.476px;">10</span><svg class="ic" style="left:714px;top:627.3px;width:24px;height:24px;fill:#fff;" viewBox="0 0 24 24"><path d="M7 10l5 5 5-5z"/></svg><span class="t" style="left:769.23px;top:639.00px;font-size:14px;letter-spacing:0.475px;">1<span class="dash">–</span>1 of 1</span><svg class="ic" style="left:851px;top:627px;width:24px;height:24px;fill:rgba(255,255,255,0.3);" viewBox="0 0 24 24"><path d="M15.410 16.590L10.830 12l4.580-4.590L14 6l-6 6 6 6 1.410-1.410z"/></svg><svg class="ic" style="left:891px;top:627px;width:24px;height:24px;fill:rgba(255,255,255,0.3);" viewBox="0 0 24 24"><path d="M8.590 16.590L13.170 12 8.590 7.410 10 6l6 6-6 6-1.410-1.410z"/></svg>
</section>
<section>
<h5 class="t m" style="left:981.03px;top:427.50px;font-size:24px;letter-spacing:-0.176px;">Banned Players</h5>
<div class="abs badge" style="left:1153.800px;top:413.800px;width:32.300px"></div>
<span class="t s" style="left:1166.39px;top:429.50px;font-size:13px;color:rgba(0,0,0,.87);">0</span>
<div class="abs btn" style="left:1563px;top:411px;width:81px;height:36px;background:#556cd6;border-radius:8px"></div>
<span class="t m" style="left:1577.92px;top:429.00px;font-size:14px;letter-spacing:0.327px;">UNBAN</span>
<div class="abs grid" style="left:982px;top:463px;width:662px;height:215px"></div>
<div class="abs hl" style="left:983px;top:519px;width:660px"></div>
<div class="abs hl" style="left:983px;top:624px;width:660px"></div>
<svg class="ic" style="left:996px;top:479.5px;width:24px;height:24px;fill:rgba(255,255,255,0.7);" viewBox="0 0 24 24"><path d="M19 5v14H5V5h14m0-2H5c-1.100 0-2 .900-2 2v14c0 1.100.900 2 2 2h14c1.100 0 2-.900 2-2V5c0-1.100-.900-2-2-2z"/></svg>
<span class="t m" style="left:1041.85px;top:492.00px;font-size:14px;letter-spacing:0.134px;">Username</span>
<span class="t m" style="left:1191.84px;top:492.00px;font-size:14px;letter-spacing:0.062px;">Player-ID</span>
<span class="t m" style="left:1391.54px;top:492.00px;font-size:14px;letter-spacing:0.193px;">Reason</span>
<span class="t m" style="left:1541.67px;top:492.00px;font-size:14px;letter-spacing:0.288px;">Last seen</span>
<span class="t" style="left:1285.64px;top:572.00px;font-size:14px;letter-spacing:0.308px;">No rows</span>
<span class="t" style="left:1301.24px;top:651.00px;font-size:14px;letter-spacing:0.038px;">Rows per page:</span><span class="t" style="left:1414.71px;top:650.00px;font-size:14px;transform:scaleX(1.0798);transform-origin:0 0;">10</span><svg class="ic" style="left:1431px;top:639.3px;width:24px;height:24px;fill:#fff;" viewBox="0 0 24 24"><path d="M7 10l5 5 5-5z"/></svg><span class="t" style="left:1486.99px;top:651.00px;font-size:14px;letter-spacing:0.477px;">0<span class="dash">–</span>0 of 0</span><svg class="ic" style="left:1569px;top:639px;width:24px;height:24px;fill:rgba(255,255,255,0.3);" viewBox="0 0 24 24"><path d="M15.410 16.590L10.830 12l4.580-4.590L14 6l-6 6 6 6 1.410-1.410z"/></svg><svg class="ic" style="left:1609px;top:639px;width:24px;height:24px;fill:rgba(255,255,255,0.3);" viewBox="0 0 24 24"><path d="M8.590 16.590L13.170 12 8.590 7.410 10 6l6 6-6 6-1.410-1.410z"/></svg>
</section>
</main>
</body>
</html>
